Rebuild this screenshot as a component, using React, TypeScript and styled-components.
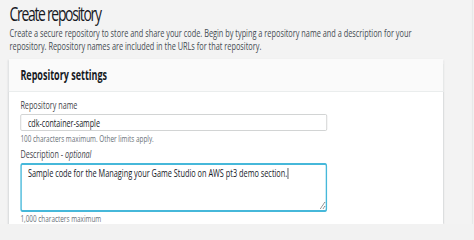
import React from "react";
import styled, { createGlobalStyle } from "styled-components";

const SQUEEZE = 0.68;

const Global = createGlobalStyle`
  html, body {
    margin: 0;
    padding: 0;
    background: #f2f2f2;
    overflow: hidden;
  }
  * { box-sizing: border-box; }
`;

const Frame = styled.div`
  width: 697px;
  height: 224px;
  transform: scaleX(${SQUEEZE});
  transform-origin: 0 0;
  font-family: "Open Sans", "Noto Sans", Arial, sans-serif;
  color: #16191f;
`;

const Page = styled.main`
  width: 695px;
  height: 224px;
  padding: 0 0 0 14px;
  background: #f3f3f3;
  border-right: 1px solid #e2e2e2;
  display: flex;
  flex-direction: column;
`;

const Title = styled.h1`
  margin: 0;
  padding-top: 1px;
  font-size: 20.5px;
  line-height: 25px;
  letter-spacing: -1.9px;
  font-weight: 400;
  color: #16191f;
`;

const Intro = styled.p`
  margin: 0;
  font-size: 10.8px;
  line-height: 13px;
  color: #444b52;
`;

const Card = styled.section`
  margin: 7px 0 0 -1px;
  width: 639px;
  background: #ffffff;
  box-shadow: 0 1px 2px rgba(0, 28, 36, 0.25), 1px 1px 2px rgba(0, 28, 36, 0.12),
    -1px 1px 2px rgba(0, 28, 36, 0.12);
  flex: 1;
`;

const CardHeader = styled.header`
  height: 33px;
  display: flex;
  align-items: center;
  padding: 0 17px;
  background: #fafafa;
  border-bottom: 1px solid #eaeded;
`;

const CardTitle = styled.h2`
  margin: 0;
  font-size: 13.25px;
  font-weight: 700;
  color: #16191f;
`;

const CardBody = styled.div`
  padding: 7px 17px 0;
  display: flex;
  flex-direction: column;
`;

const Label = styled.label<{ $gap?: number }>`
  font-size: 10.6px;
  line-height: 13px;
  color: #3f454b;
  margin-top: ${(p) => p.$gap ?? 0}px;
  margin-bottom: 2px;
  em {
    font-style: italic;
  }
`;

const TextInput = styled.input`
  width: 451px;
  height: 17px;
  margin: 0;
  padding: 0 0 0 10px;
  border: 1px solid #c9cccc;
  border-radius: 2px;
  font-family: inherit;
  font-size: 10.5px;
  color: #16191f;
  background: #ffffff;
  outline: none;
`;

const Hint = styled.div<{ $gap?: number }>`
  margin-top: ${(p) => p.$gap ?? 2}px;
  font-size: 9.4px;
  line-height: 11px;
  color: #687078;
`;

const TextArea = styled.div`
  width: 451px;
  height: 49px;
  padding: 1px 0 0 9px;
  border: 2px solid #46b8da;
  border-radius: 3px;
  font-size: 10.8px;
  line-height: 13px;
  color: #16191f;
  background: #ffffff;
  overflow: auto;
  resize: vertical;
`;

const Caret = styled.span`
  display: inline-block;
  width: 0;
  height: 11px;
  margin-left: 1px;
  border-left: 1px solid #16191f;
  vertical-align: -2px;
`;

export default function App() {
  return (
    <>
      <Global />
      <Frame>
        <Page>
          <Title>Create repository</Title>
          <Intro>
            Create a secure repository to store and share your code. Begin by typing a
            repository name and a description for your
            <br />
            repository. Repository names are included in the URLs for that repository.
          </Intro>
          <Card>
            <CardHeader>
              <CardTitle>Repository settings</CardTitle>
            </CardHeader>
            <CardBody>
              <Label htmlFor="repo-name">Repository name</Label>
              <TextInput id="repo-name" defaultValue="cdk-container-sample" readOnly />
              <Hint>100 characters maximum. Other limits apply.</Hint>
              <Label $gap={4}>
                Description - <em>optional</em>
              </Label>
              <TextArea>
                Sample code for the Managing your Game Studio on AWS pt3 demo section.
                <Caret />
              </TextArea>
              <Hint $gap={1}>1,000 characters maximum</Hint>
            </CardBody>
          </Card>
        </Page>
      </Frame>
    </>
  );
}
